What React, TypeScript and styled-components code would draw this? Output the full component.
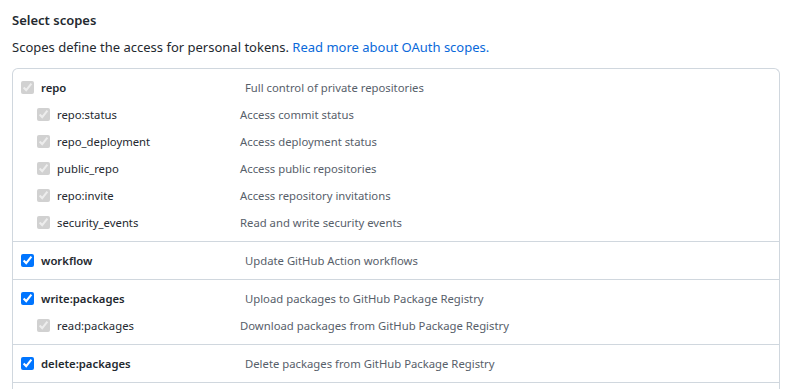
import styled, { createGlobalStyle } from "styled-components";

type Scope = {
  name: string;
  description: string;
  locked?: boolean;
  children?: { name: string; description: string }[];
};

const scopes: Scope[] = [
  {
    name: "repo",
    description: "Full control of private repositories",
    locked: true,
    children: [
      { name: "repo:status", description: "Access commit status" },
      { name: "repo_deployment", description: "Access deployment status" },
      { name: "public_repo", description: "Access public repositories" },
      { name: "repo:invite", description: "Access repository invitations" },
      { name: "security_events", description: "Read and write security events" },
    ],
  },
  { name: "workflow", description: "Update GitHub Action workflows" },
  {
    name: "write:packages",
    description: "Upload packages to GitHub Package Registry",
    children: [{ name: "read:packages", description: "Download packages from GitHub Package Registry" }],
  },
  { name: "delete:packages", description: "Delete packages from GitHub Package Registry" },
];

const App = () => {
  return (
    <>
      <GlobalStyle />
      <Page>
        <Title>Select scopes</Title>
        <Intro>
          Scopes define the access for personal tokens. <Link href="#">Read more about OAuth scopes.</Link>
        </Intro>
        <ScopeBox>
          {scopes.map((scope) => (
            <Group key={scope.name}>
              <Row>
                <Label>
                  <Check type="checkbox" checked disabled={scope.locked} readOnly />
                  <Name $strong>{scope.name}</Name>
                </Label>
                <Description>{scope.description}</Description>
              </Row>
              {scope.children?.map((child) => (
                <Row key={child.name} $nested>
                  <Label $nested>
                    <Check type="checkbox" checked disabled readOnly />
                    <Name>{child.name}</Name>
                  </Label>
                  <Description>{child.description}</Description>
                </Row>
              ))}
            </Group>
          ))}
        </ScopeBox>
      </Page>
    </>
  );
};

export default App;

const GlobalStyle = createGlobalStyle`
  html, body {
    margin: 0;
    overflow: hidden;
    background: #ffffff;
  }
  body {
    font-family: "Segoe UI", "Noto Sans", sans-serif;
    color: #24292f;
  }
`;

const Page = styled.div`
  width: 768px;
  padding: 10px 0 0 12px;
`;

const Title = styled.h3`
  margin: 0 0 6px;
  font-size: 13px;
  font-weight: 600;
  line-height: 21px;
`;

const Intro = styled.p`
  margin: 0 0 10px;
  font-size: 13px;
  line-height: 21px;
`;

const Link = styled.a`
  color: #0969da;
  text-decoration: none;
`;

const ScopeBox = styled.div`
  border: 1px solid #d0d7de;
  border-bottom: none;
  border-radius: 6px 6px 0 0;
  padding-bottom: 40px;
`;

const Group = styled.div`
  padding: 5px 0;
  border-bottom: 1px solid #d0d7de;
`;

const Row = styled.div<{ $nested?: boolean }>`
  display: flex;
  align-items: center;
  height: 27px;
  padding-left: ${(p) => (p.$nested ? "24px" : "8px")};
`;

const Label = styled.label<{ $nested?: boolean }>`
  display: flex;
  align-items: center;
  gap: 7px;
  width: ${(p) => (p.$nested ? "203px" : "224px")};
  flex-shrink: 0;
`;

const Check = styled.input`
  margin: 0;
  width: 13px;
  height: 13px;
`;

const Name = styled.span<{ $strong?: boolean }>`
  font-size: 11.3px;
  font-weight: ${(p) => (p.$strong ? 600 : 400)};
`;

const Description = styled.span`
  font-size: 11.3px;
  color: #57606a;
`;
